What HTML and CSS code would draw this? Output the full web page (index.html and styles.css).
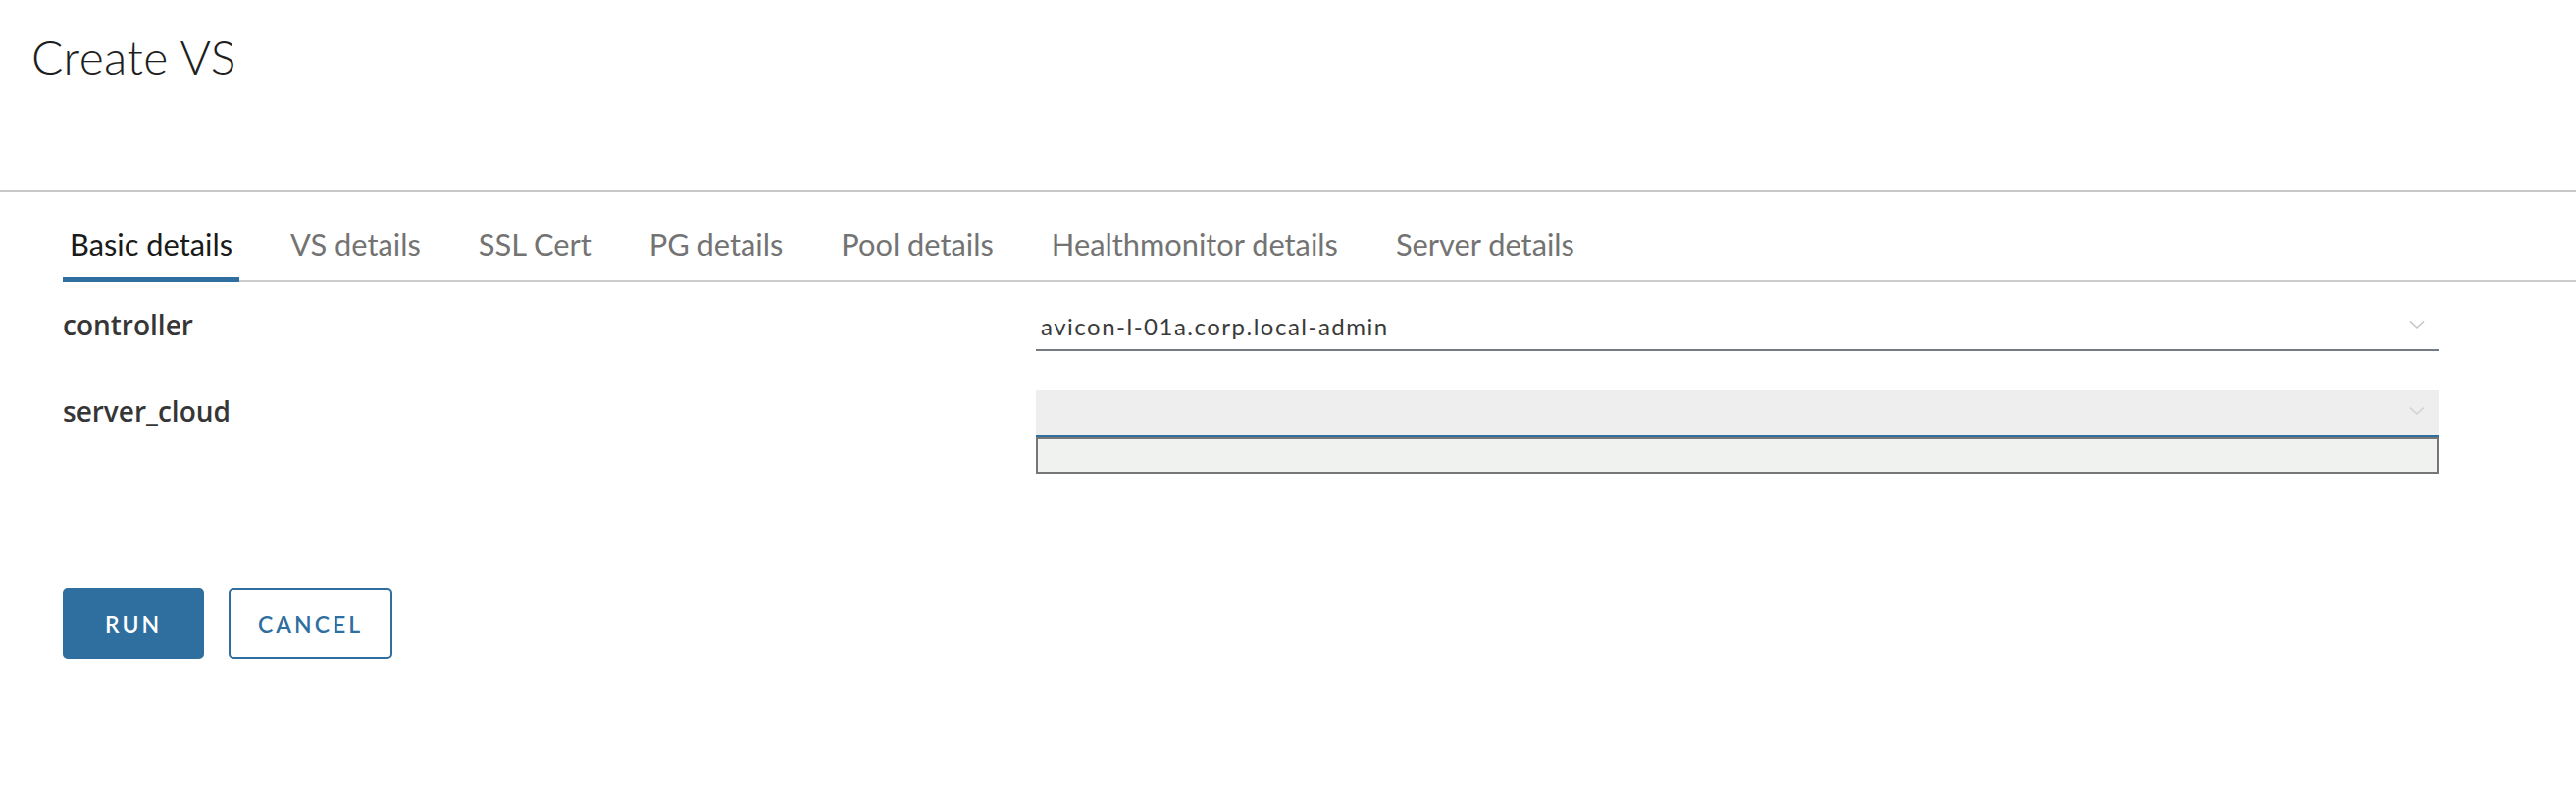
FILE: index.html
```html
<!DOCTYPE html>
<html lang="en">
<head>
<meta charset="utf-8">
<title>Create VS</title>
<link rel="stylesheet" href="styles.css">
</head>
<body>
<div class="page">
  <header class="header">
    <h1 class="title">Create VS</h1>
  </header>
  <nav class="tabs">
    <a class="tab active">Basic details</a>
    <a class="tab">VS details</a>
    <a class="tab">SSL Cert</a>
    <a class="tab">PG details</a>
    <a class="tab">Pool details</a>
    <a class="tab">Healthmonitor details</a>
    <a class="tab">Server details</a>
  </nav>
  <form class="form">
    <div class="row">
      <label class="label">controller</label>
      <div class="field">
        <div class="select">
          <span class="value">avicon-l-01a.corp.local-admin</span>
          <svg class="chev" width="16" height="10" viewBox="0 0 16 10"><path d="M1 1.5 L8 8 L15 1.5" fill="none" stroke="#c4c4c4" stroke-width="1.6"/></svg>
        </div>
      </div>
    </div>
    <div class="row">
      <label class="label">server_cloud</label>
      <div class="field">
        <div class="select disabled">
          <span class="value"></span>
          <svg class="chev" width="16" height="10" viewBox="0 0 16 10"><path d="M1 1.5 L8 8 L15 1.5" fill="none" stroke="#d2d2d2" stroke-width="1.6"/></svg>
        </div>
        <div class="listbox"></div>
      </div>
    </div>
  </form>
  <div class="actions">
    <button class="btn btn-primary" type="button">RUN</button>
    <button class="btn btn-outline" type="button">CANCEL</button>
  </div>
</div>
</body>
</html>
```
FILE: styles.css
```css
html, body {
  margin: 0;
  padding: 0;
  background: #ffffff;
}
body {
  font-family: Lato, "Open Sans", "Liberation Sans", sans-serif;
  color: #333333;
}
.header {
  box-sizing: border-box;
  height: 196px;
  padding: 30px 0 0 32px;
  border-bottom: 2px solid #c8c8c8;
}
.title {
  margin: 0;
  font-size: 48px;
  line-height: 56px;
  font-weight: 300;
  letter-spacing: 0.4px;
  color: #1e1e1e;
}
.tabs {
  display: flex;
  gap: 45px;
  margin-left: 64px;
  height: 92px;
  box-shadow: inset 0 -2px 0 #cccccc;
}
.tab {
  display: flex;
  align-items: flex-end;
  padding: 0 7px 20px 7px;
  font-size: 30.8px;
  line-height: 36px;
  color: #737373;
  cursor: pointer;
}
.tab.active {
  color: #1a1a1a;
  box-shadow: inset 0 -6px 0 #2e6f9f;
}
.form {
  padding: 22px 0 0 64px;
  display: flex;
  flex-direction: column;
  gap: 40px;
}
.row {
  display: grid;
  grid-template-columns: 992px 1430px;
  align-items: start;
}
.label {
  font-family: "Open Sans", Lato, sans-serif;
  font-weight: 600;
  font-size: 28px;
  line-height: 42px;
  color: #363636;
}
.select {
  box-sizing: border-box;
  height: 48px;
  display: flex;
  align-items: center;
  justify-content: space-between;
  padding: 0 14px 0 5px;
  border-bottom: 2px solid #737c84;
  font-size: 24px;
  letter-spacing: 1.5px;
  line-height: 28px;
  color: #3a3a3a;
}
.chev {
  margin-top: -4px;
}
.select.disabled {
  background: #eeeeee;
  border-bottom-color: #2e6f9f;
}
.listbox {
  box-sizing: border-box;
  height: 37px;
  border: 2px solid #767676;
  background: #f0f2f0;
}
.actions {
  display: flex;
  gap: 25px;
  padding-left: 64px;
  margin-top: 117px;
}
.btn {
  box-sizing: border-box;
  height: 72px;
  border-radius: 5px;
  font-family: Lato, "Open Sans", sans-serif;
  font-weight: 600;
  font-size: 23px;
  letter-spacing: 3px;
  cursor: pointer;
}
.btn-primary {
  width: 144px;
  background: #2e6f9f;
  border: 2px solid #2e6f9f;
  color: #ffffff;
}
.btn-outline {
  width: 167px;
  background: #ffffff;
  border: 2px solid #2e6f9f;
  color: #2e6f9f;
}
```
